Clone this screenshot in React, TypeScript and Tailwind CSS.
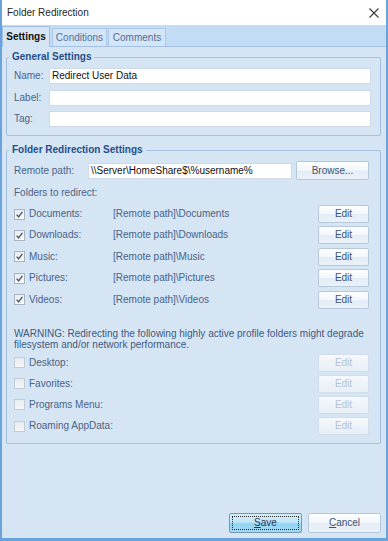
import React from "react";

const btnBase =
  "flex items-center justify-center rounded-[2px] border text-[10px] leading-[12px]";
const btnOn =
  "border-[#b7c8dc] bg-[linear-gradient(to_bottom,#fdfeff_0%,#f3f7fb_48%,#e4ecf6_52%,#eaf1f9_100%)] text-[#3b5474]";
const btnOff =
  "border-[#d2dde9] bg-[linear-gradient(to_bottom,#f6f9fc_0%,#eef3f8_50%,#e8eff7_100%)] text-[#b3c2d3]";

function Check({ checked }: { checked: boolean }) {
  return (
    <div
      className={
        "flex h-[11px] w-[11px] shrink-0 items-center justify-center border " +
        (checked
          ? "border-[#a9b3c0] bg-[linear-gradient(to_bottom,#e9edf2,#f9fafc)]"
          : "border-[#c3cbd5] bg-[linear-gradient(to_bottom,#e8ecf1,#f4f6f8)]")
      }
    >
      {checked && (
        <svg width="9" height="9" viewBox="0 0 9 9">
          <path d="M1.6 4.6 L3.6 6.8 L7.4 1.8" fill="none" stroke="#4d5b6c" strokeWidth="1.4" />
        </svg>
      )}
    </div>
  );
}

function FolderRow({
  name,
  path,
  checked,
  enabled,
}: {
  name: string;
  path?: string;
  checked: boolean;
  enabled: boolean;
}) {
  return (
    <div className="flex h-[18px] items-center">
      <Check checked={checked} />
      <div className="ml-[4px] w-[84px] shrink-0 text-[#4a6386]">{name}</div>
      <div className="flex-1 text-[#4a6386]">{path}</div>
      <div className={btnBase + " h-[18px] w-[51px] " + (enabled ? btnOn : btnOff)}>Edit</div>
    </div>
  );
}

function Input({ value, className }: { value?: string; className?: string }) {
  return (
    <div
      className={
        "flex h-[16px] items-center border border-[#cfdae6] bg-white pl-[2px] text-[#111] " +
        (className || "")
      }
    >
      {value}
    </div>
  );
}

export default function App() {
  return (
    <div className="flex h-[541px] w-[388px] flex-col border-x-2 border-b-[3px] border-[#6aa3dc] bg-white font-['Liberation_Sans',Arial,sans-serif] text-[10px] leading-[12px]">
      {/* Title bar */}
      <div className="flex h-[25px] shrink-0 items-center justify-between bg-white pl-[5px] pr-[7px] text-[#1f1f1f]">
        <span className="pt-[1px]">Folder Redirection</span>
        <svg width="10" height="10" viewBox="0 0 10 10">
          <path d="M0.5 0.5 L9.5 9.5 M9.5 0.5 L0.5 9.5" stroke="#3a3a3a" strokeWidth="1.1" />
        </svg>
      </div>

      {/* Tab strip */}
      <div className="flex h-[22px] shrink-0 items-end border-b border-[#a2c1e4] bg-[#c3dcf5]">
        <div className="relative -mb-px flex h-[21px] w-[48px] items-center justify-center border border-b-0 border-[#9fbfe3] bg-[#d6e5f4] pb-[1px] font-bold text-[#111]">
          Settings
        </div>
        <div className="ml-[2px] flex h-[18px] w-[55px] items-center justify-center border border-b-0 border-[#abc8e8] bg-[#d3e5f7] text-[#50709a]">
          Conditions
        </div>
        <div className="ml-[1px] flex h-[18px] w-[58px] items-center justify-center border border-b-0 border-[#abc8e8] bg-[#d3e5f7] text-[#50709a]">
          Comments
        </div>
      </div>

      {/* Content */}
      <div className="flex flex-1 flex-col bg-[#d6e5f4] pl-[4px] pr-[5px]">
        {/* General settings */}
        <fieldset className="mt-[4px] rounded-[2px] border border-[#a5c1e2]">
          <legend className="ml-[2px] px-[3px] font-bold text-[#234f8a]">General Settings</legend>
          <div className="flex flex-col gap-[5.5px] pb-[8px] pl-[7px] pr-[9px] pt-[5px]">
            {[
              ["Name:", "Redirect User Data"],
              ["Label:", ""],
              ["Tag:", ""],
            ].map(([l, v]) => (
              <div key={l} className="flex items-center">
                <div className="w-[35px] shrink-0 text-[#4a6386]">{l}</div>
                <Input value={v} className="flex-1" />
              </div>
            ))}
          </div>
        </fieldset>

        {/* Folder redirection settings */}
        <fieldset className="mt-[8px] rounded-[2px] border border-[#a5c1e2]">
          <legend className="ml-[2px] px-[3px] font-bold text-[#234f8a]">
            Folder Redirection Settings
          </legend>
          <div className="flex flex-col pb-[8px] pl-[7px] pr-[11px] pt-[5px]">
            <div className="flex h-[19px] items-center">
              <div className="w-[74px] shrink-0 text-[#4a6386]">Remote path:</div>
              <Input value={"\\\\Server\\HomeShare$\\%username%"} className="w-[204px]" />
              <div className={btnBase + " ml-[4px] h-[19px] w-[73px] " + btnOn}>Browse...</div>
            </div>
            <div className="mt-[7px] text-[#4a6386]">Folders to redirect:</div>
            <div className="mt-[6px] flex flex-col gap-[3.4px]">
              <FolderRow name="Documents:" path="[Remote path]\Documents" checked enabled />
              <FolderRow name="Downloads:" path="[Remote path]\Downloads" checked enabled />
              <FolderRow name="Music:" path="[Remote path]\Music" checked enabled />
              <FolderRow name="Pictures:" path="[Remote path]\Pictures" checked enabled />
              <FolderRow name="Videos:" path="[Remote path]\Videos" checked enabled />
            </div>
            <div className="mt-[19px] leading-[11px] text-[#3f5a7f]">
              WARNING: Redirecting the following highly active profile folders might degrade
              filesystem and/or network performance.
            </div>
            <div className="mt-[4px] flex flex-col gap-[3.2px]">
              <FolderRow name="Desktop:" checked={false} enabled={false} />
              <FolderRow name="Favorites:" checked={false} enabled={false} />
              <FolderRow name="Programs Menu:" checked={false} enabled={false} />
              <FolderRow name="Roaming AppData:" checked={false} enabled={false} />
            </div>
          </div>
        </fieldset>

        <div className="flex-1" />

        {/* Bottom buttons */}
        <div className="flex justify-end gap-[6px] pb-[5px]">
          <div className="relative flex h-[20px] w-[73px] items-center justify-center rounded-[2px] border border-[#7896b8] bg-[linear-gradient(to_bottom,#d4effb_0%,#bfe6f8_45%,#93d3f0_55%,#a3daf2_100%)] text-[#1f3a5e]">
            <div className="absolute inset-[2px] border border-dotted border-[#2b2b2b]" />
            <span>
              <span className="underline">S</span>ave
            </span>
          </div>
          <div className={btnBase + " h-[20px] w-[73px] " + btnOn}>
            <span>
              <span className="underline">C</span>ancel
            </span>
          </div>
        </div>
      </div>
    </div>
  );
}
